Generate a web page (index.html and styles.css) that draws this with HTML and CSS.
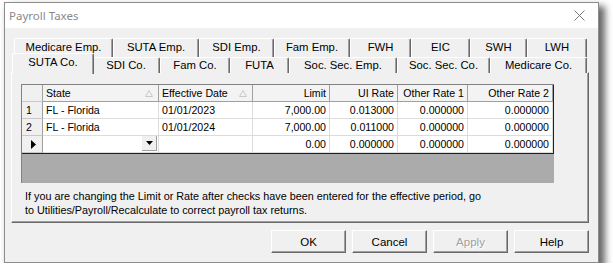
FILE: index.html
```html
<!DOCTYPE html>
<html lang="en">
<head>
    <meta charset="UTF-8">
    <title>Payroll Taxes</title>
    <link rel="stylesheet" href="styles.css">
</head>
<body>
    <div class="window">
        <div class="titleBar">
            <span class="titleText">Payroll Taxes</span>
            <svg class="closeIcon" width="11" height="11" viewBox="0 0 11 11">
                <path d="M0.5 0.5 L10.5 10.5 M10.5 0.5 L0.5 10.5" stroke="#7a7a7a" stroke-width="1" fill="none"/>
            </svg>
        </div>

        <div class="dialogBody">
            <div class="tabs">
                <div class="tabRow backRow">
                    <div class="tab" style="width:99px">Medicare Emp.</div>
                    <div class="tab" style="width:86px">SUTA Emp.</div>
                    <div class="tab" style="width:75px">SDI Emp.</div>
                    <div class="tab" style="width:76px">Fam Emp.</div>
                    <div class="tab" style="width:61px">FWH</div>
                    <div class="tab" style="width:59px">EIC</div>
                    <div class="tab" style="width:57px">SWH</div>
                    <div class="tab" style="width:60px">LWH</div>
                </div>
                <div class="tabRow frontRow">
                    <div class="tab selected" style="width:82px">SUTA Co.</div>
                    <div class="tab" style="width:68px">SDI Co.</div>
                    <div class="tab" style="width:70px">Fam Co.</div>
                    <div class="tab" style="width:59px">FUTA</div>
                    <div class="tab" style="width:108px">Soc. Sec. Emp.</div>
                    <div class="tab" style="width:93px">Soc. Sec. Co.</div>
                    <div class="tab" style="width:97px">Medicare Co.</div>
                </div>
            </div>

            <div class="tabPanel">
                <div class="dataGrid">
                    <div class="gridRows">
                        <div class="cell head indicator"></div>
                        <div class="cell head left">State<svg class="sortIcon" width="8" height="7" viewBox="0 0 8 7"><path d="M4 0.5 L7.5 6.5 L0.5 6.5 Z" fill="none" stroke="#c8c8c8"/></svg></div>
                        <div class="cell head left">Effective Date<svg class="sortIcon" width="8" height="7" viewBox="0 0 8 7"><path d="M4 0.5 L7.5 6.5 L0.5 6.5 Z" fill="none" stroke="#c8c8c8"/></svg></div>
                        <div class="cell head">Limit</div>
                        <div class="cell head">UI Rate</div>
                        <div class="cell head">Other Rate 1</div>
                        <div class="cell head">Other Rate 2</div>

                        <div class="cell indicator">1</div>
                        <div class="cell left">FL - Florida</div>
                        <div class="cell left">01/01/2023</div>
                        <div class="cell">7,000.00</div>
                        <div class="cell">0.013000</div>
                        <div class="cell">0.000000</div>
                        <div class="cell">0.000000</div>

                        <div class="cell indicator">2</div>
                        <div class="cell left">FL - Florida</div>
                        <div class="cell left">01/01/2024</div>
                        <div class="cell">7,000.00</div>
                        <div class="cell">0.011000</div>
                        <div class="cell">0.000000</div>
                        <div class="cell">0.000000</div>

                        <div class="cell indicator current"><svg width="5" height="9" viewBox="0 0 5 9"><path d="M0 0 L5 4.5 L0 9 Z" fill="#000"/></svg></div>
                        <div class="cell left comboCell"><span class="dropBtn"><svg width="7" height="4" viewBox="0 0 7 4"><path d="M0 0 L7 0 L3.5 4 Z" fill="#000"/></svg></span></div>
                        <div class="cell left"></div>
                        <div class="cell">0.00</div>
                        <div class="cell">0.000000</div>
                        <div class="cell">0.000000</div>
                        <div class="cell">0.000000</div>
                    </div>
                </div>
                <p class="note">If you are changing the Limit or Rate after checks have been entered for the effective period, go<br>to Utilities/Payroll/Recalculate to correct payroll tax returns.</p>
            </div>

            <div class="buttonBar">
                <button class="dlgBtn">OK</button>
                <button class="dlgBtn">Cancel</button>
                <button class="dlgBtn" disabled>Apply</button>
                <button class="dlgBtn">Help</button>
            </div>
        </div>
    </div>
</body>
</html>
```

FILE: styles.css
```css
body {
    margin: 0;
    padding: 2px 0 0 4px;
    background-color: #ffffff;
    font-family: 'Liberation Sans', Arial, sans-serif;
    font-size: 11px;
    color: #000000;
}

.window {
    width: 595px;
    height: 261px;
    box-sizing: border-box;
    border: 1px solid #8c8c8c;
    background-color: #f0f0f0;
    box-shadow: 5px 5px 7px 1px rgba(0, 0, 0, 0.6);
    display: flex;
    flex-direction: column;
}

.titleBar {
    height: 25px;
    background-color: #ffffff;
    display: flex;
    align-items: center;
    justify-content: space-between;
    padding: 0 13px 0 4px;
}

.titleText {
    font-family: 'Noto Sans', sans-serif;
    font-size: 11.5px;
    color: #8a8a8a;
}

.closeIcon {
    display: block;
}

.dialogBody {
    flex: 1;
    padding: 10px 0 0 6px;
}

/* tabs */

.tabs {
    padding-left: 3px;
}

.tabRow {
    display: flex;
}

.backRow {
    height: 19px;
}

.frontRow {
    height: 16px;
    margin-bottom: -1px;
}

.tab {
    box-sizing: border-box;
    height: 100%;
    border-top: 1px solid #ffffff;
    border-left: 1px solid #ffffff;
    border-right: 1px solid #696969;
    box-shadow: inset -1px 0 #a0a0a0;
    border-radius: 2px 2px 0 0;
    background-color: #f0f0f0;
    text-align: center;
    font-size: 11.3px;
    line-height: 17px;
}

.frontRow .tab {
    line-height: 15px;
}

.frontRow .tab.selected {
    position: relative;
    z-index: 1;
    height: 21px;
    margin: -4px -2px 0 -2px;
    line-height: 17px;
}

.tabPanel {
    width: 578px;
    height: 151px;
    box-sizing: border-box;
    border-top: 1px solid #ffffff;
    border-left: 1px solid #ffffff;
    border-right: 1px solid #696969;
    border-bottom: 1px solid #696969;
    box-shadow: inset -1px -1px #a0a0a0;
    padding: 11px 0 0 9px;
}

/* grid */

.dataGrid {
    width: 533px;
    height: 99px;
    box-sizing: border-box;
    background-color: #ababab;
    border-top: 1px solid #828282;
    border-left: 1px solid #828282;
}

.gridRows {
    display: grid;
    grid-template-columns: 21px 116px 94px 77px 68px 70px 85px;
    grid-auto-rows: 17px;
    width: 531px;
    background-color: #ffffff;
    border-right: 1px solid #202020;
    border-bottom: 1px solid #202020;
    font-size: 10.6px;
}

.cell {
    box-sizing: border-box;
    border-right: 1px solid #dcdcdc;
    border-bottom: 1px solid #dcdcdc;
    padding: 0 3px;
    line-height: 16px;
    text-align: right;
    white-space: nowrap;
    overflow: hidden;
}

.cell.left {
    text-align: left;
}

.cell.head {
    background-color: #f3f3f3;
    border-right-color: #a0a0a0;
    border-bottom-color: #a0a0a0;
}

.sortIcon {
    float: right;
    margin: 5px 2px 0 0;
}

.cell.indicator {
    background-color: #f0f0f0;
    border-right-color: #a0a0a0;
    border-bottom-color: #c8c8c8;
    text-align: left;
    padding-left: 4px;
}

.cell.indicator.current {
    padding-left: 9px;
    padding-top: 4px;
    line-height: 0;
}

.comboCell {
    display: flex;
    justify-content: flex-end;
    padding-right: 1px;
}

.dropBtn {
    width: 15px;
    height: 15px;
    box-sizing: border-box;
    background-color: #f0f0f0;
    border-right: 1px solid #a0a0a0;
    border-bottom: 1px solid #a0a0a0;
    display: flex;
    align-items: center;
    justify-content: center;
}

.note {
    margin: 6px 0 0 4px;
    font-size: 10.8px;
    line-height: 14px;
}

/* buttons */

.buttonBar {
    display: flex;
    gap: 6px;
    padding: 7px 0 0 260px;
}

.dlgBtn {
    width: 75px;
    height: 23px;
    box-sizing: border-box;
    background-color: #f0f0f0;
    border-top: 1px solid #ffffff;
    border-left: 1px solid #ffffff;
    border-right: 1px solid #696969;
    border-bottom: 1px solid #696969;
    box-shadow: inset -1px -1px #a0a0a0;
    font-family: 'Liberation Sans', Arial, sans-serif;
    font-size: 11.5px;
    color: #000000;
    padding: 0;
}

.dlgBtn:disabled {
    color: #a0a0a0;
    text-shadow: 1px 1px #ffffff;
}
```
